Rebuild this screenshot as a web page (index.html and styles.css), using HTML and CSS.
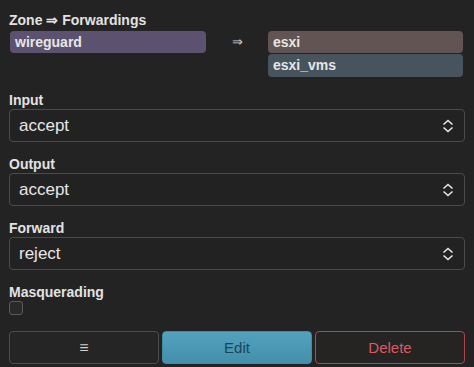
FILE: index.html
```html
<!DOCTYPE html>
<html>
<head>
<meta charset="utf-8">
<link rel="stylesheet" href="styles.css">
</head>
<body>
<div class="panel">
  <div class="label">Zone ⇒ Forwardings</div>
  <div class="zone-row">
    <div class="badge badge-wg">wireguard</div>
    <div class="arrow">⇒</div>
    <div class="dest">
      <div class="badge badge-esxi">esxi</div>
      <div class="badge badge-vms">esxi_vms</div>
    </div>
  </div>

  <div class="field">
    <div class="label">Input</div>
    <div class="select"><span>accept</span>
      <svg class="chev" viewBox="0 0 12 14" width="12" height="14"><path d="M1.5 5.5 L6 1.5 L10.5 5.5 M1.5 8.5 L6 12.5 L10.5 8.5" fill="none" stroke="#e6e6e6" stroke-width="1.6"/></svg>
    </div>
  </div>
  <div class="field">
    <div class="label">Output</div>
    <div class="select"><span>accept</span>
      <svg class="chev" viewBox="0 0 12 14" width="12" height="14"><path d="M1.5 5.5 L6 1.5 L10.5 5.5 M1.5 8.5 L6 12.5 L10.5 8.5" fill="none" stroke="#e6e6e6" stroke-width="1.6"/></svg>
    </div>
  </div>
  <div class="field">
    <div class="label">Forward</div>
    <div class="select"><span>reject</span>
      <svg class="chev" viewBox="0 0 12 14" width="12" height="14"><path d="M1.5 5.5 L6 1.5 L10.5 5.5 M1.5 8.5 L6 12.5 L10.5 8.5" fill="none" stroke="#e6e6e6" stroke-width="1.6"/></svg>
    </div>
  </div>
  <div class="field">
    <div class="label">Masquerading</div>
    <div class="checkbox"></div>
  </div>

  <div class="buttons">
    <div class="btn btn-menu">≡</div>
    <div class="btn btn-edit">Edit</div>
    <div class="btn btn-delete">Delete</div>
  </div>
</div>
</body>
</html>
```
FILE: styles.css
```css
html, body {
  margin: 0;
  padding: 0;
  background: #232323;
  height: 100%;
}
body {
  font-family: "Liberation Sans", Arial, sans-serif;
  color: #e4e4e4;
}
.panel {
  padding: 12px 9px 0 9px;
  width: 456px;
}
.label {
  font-size: 14px;
  font-weight: bold;
  line-height: 17px;
  height: 17px;
  color: #e2e2e2;
}
.zone-row {
  display: flex;
  margin-top: 2px;
  align-items: flex-start;
}
.badge {
  height: 22px;
  line-height: 22px;
  font-size: 14px;
  font-weight: bold;
  color: #e6e6e6;
  padding: 0 5px;
  border-radius: 4px;
  box-sizing: border-box;
}
.badge-wg {
  width: 196px;
  margin-left: 1px;
  background: #5d5170;
}
.arrow {
  width: 62px;
  text-align: center;
  font-size: 13px;
  line-height: 22px;
  color: #cfcfcf;
}
.dest {
  width: 195px;
  display: flex;
  flex-direction: column;
  gap: 1px;
}
.badge-esxi {
  background: #615452;
}
.badge-vms {
  background: #47545e;
  height: 23px;
  line-height: 23px;
}
.field {
  margin-top: 14px;
}
.zone-row + .field {
  margin-top: 15px;
}
.select {
  height: 33px;
  box-sizing: border-box;
  border: 1px solid #4b4b4b;
  border-radius: 4px;
  background: #222222;
  display: flex;
  align-items: center;
  justify-content: space-between;
  padding: 0 10px 0 9px;
  font-size: 17px;
  color: #e6e6e6;
}
.chev {
  display: block;
}
.checkbox {
  width: 14px;
  height: 14px;
  box-sizing: border-box;
  border: 1px solid #5a5a5a;
  border-radius: 3px;
  background: #2a2a2a;
}
.buttons {
  display: flex;
  gap: 3px;
  margin-top: 16px;
}
.btn {
  width: 150px;
  height: 33px;
  box-sizing: border-box;
  border-radius: 4px;
  display: flex;
  align-items: center;
  justify-content: center;
  font-size: 15px;
}
.btn-menu {
  border: 1px solid #4d4d4d;
  background: #252525;
  color: #d0d0d0;
  font-size: 16px;
}
.btn-edit {
  background: linear-gradient(#52a2bd, #448fab);
  border: 1px solid #3f8aa5;
  color: #1c4658;
}
.btn-delete {
  border: 1px solid #b0454f;
  background: #262323;
  color: #d85c64;
}
```
